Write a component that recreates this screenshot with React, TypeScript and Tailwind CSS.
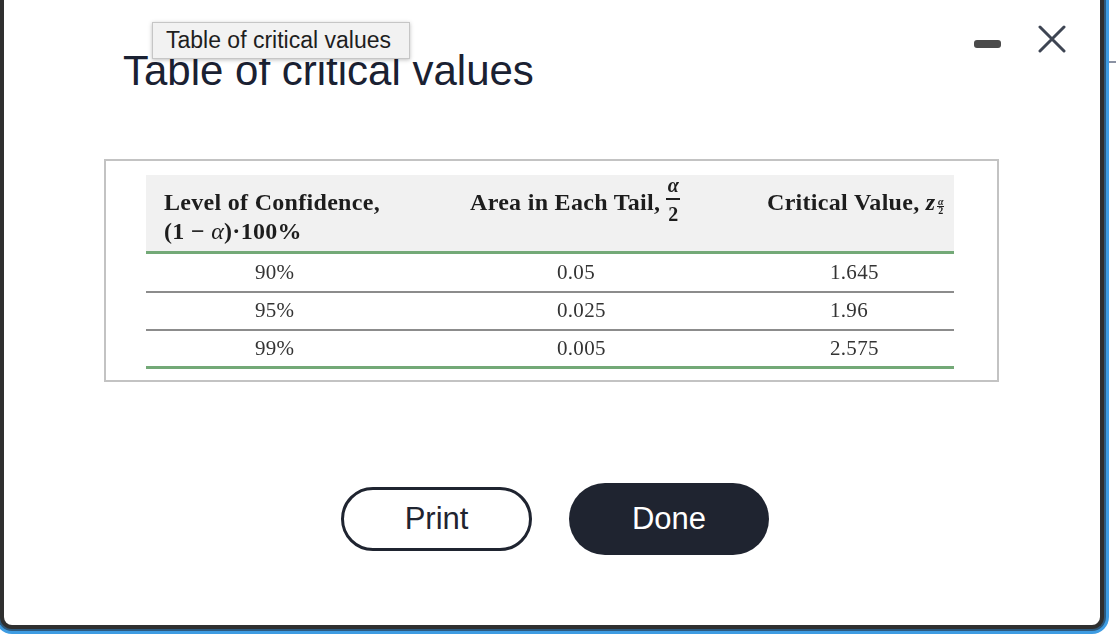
import React from "react";

const sans = "font-['Liberation_Sans',Arial,sans-serif]";
const serif = "font-['Liberation_Serif','Times_New_Roman',serif]";

type Row = { level: string; tail: string; z: string; line: "gray" | "green"; h: string };

const rows: Row[] = [
  { level: "90%", tail: "0.05", z: "1.645", line: "gray", h: "h-[39px]" },
  { level: "95%", tail: "0.025", z: "1.96", line: "gray", h: "h-[38px]" },
  { level: "99%", tail: "0.005", z: "2.575", line: "green", h: "h-[38px]" },
];

function Fraction({ small }: { small?: boolean }) {
  if (small) {
    return (
      <span className="ml-[2px] mt-[10px] flex flex-col items-center">
        <span className="text-[10px] leading-[8px] italic">α</span>
        <span className="h-px w-[7px] bg-[#1d1d1d]" />
        <span className="text-[10px] leading-[8px]">2</span>
      </span>
    );
  }
  return (
    <span className="ml-[6px] mt-[-12px] flex flex-col items-center">
      <span className="text-[20px] leading-[18px] italic">α</span>
      <span className="mb-[5px] mt-[4px] h-[2px] w-[14px] bg-[#1d1d1d]" />
      <span className="text-[20px] leading-[18px]">2</span>
    </span>
  );
}

function CriticalTable() {
  return (
    <div className="ml-[100px] mt-[64px] h-[223px] w-[895px] border-2 border-[#c3c3c3] bg-white pl-[40px] pt-[14px]">
      <div className={`w-[808px] blur-[0.35px] ${serif}`}>
        <div className="grid h-[79px] grid-cols-[302px_300px_206px] border-b-[3px] border-[#73a977] bg-[#f1f1f1] pt-[13px] text-[24px] font-bold leading-[29px] tracking-[0.3px] text-[#1d1d1d]">
          <div className="pl-[18px]">
            <div>Level of Confidence,</div>
            <div>
              (1&nbsp;−&nbsp;<span className="font-normal italic">α</span>)·100%
            </div>
          </div>
          <div className="flex items-start whitespace-nowrap pl-[22px]">
            <span>Area in Each Tail,</span>
            <Fraction />
          </div>
          <div className="flex items-start whitespace-nowrap pl-[19px]">
            <span>
              Critical Value,&nbsp;<span className="italic">z</span>
            </span>
            <Fraction small />
          </div>
        </div>
        {rows.map((r) => (
          <div
            key={r.level}
            className={`grid grid-cols-[302px_300px_206px] items-center text-[21px] tracking-[0.3px] text-[#333] ${r.h} ${
              r.line === "gray" ? "border-b-2 border-[#8c8c8c]" : "border-b-[3px] border-[#73a977]"
            }`}
          >
            <div className="pl-[109px]">{r.level}</div>
            <div className="pl-[109px]">{r.tail}</div>
            <div className="pl-[82px]">{r.z}</div>
          </div>
        ))}
      </div>
    </div>
  );
}

export default function App() {
  return (
    <div className={`flex h-[634px] w-[1116px] overflow-hidden bg-white ${sans}`}>
      <div className="relative flex h-[629px] w-[1104px] shrink-0 flex-col rounded-b-[12px] border-x-4 border-b-4 border-[#2f2f2f] bg-white shadow-[0_0_0_2px_#2d5a7e,0_0_0_5px_#3e9ce2]">
        <div className="flex items-start pr-[34px]">
          <h1 className="mt-[47px] pl-[119px] text-[42px] leading-[48px] font-normal text-[#1a2132]">
            Table of critical values
          </h1>
          <div className="ml-auto mt-[25px] flex items-start gap-[37px]">
            <button type="button" className="mt-[15px] h-[8px] w-[27px] rounded-[3px] bg-[#4a4a4a]" aria-label="Minimize" />
            <button type="button" aria-label="Close" className="text-[#3e4553]">
              <svg width="28" height="28" viewBox="0 0 28 28" fill="none" stroke="currentColor" strokeWidth="3" strokeLinecap="round">
                <path d="M2 2 L26 26 M26 2 L2 26" />
              </svg>
            </button>
          </div>
        </div>

        <div className="absolute left-[148px] top-[22px] h-[37px] w-[258px] border border-[#c6c6c6] bg-[#f2f2f2] pl-[13px] text-[23px] leading-[34px] text-[#1e1e1e] shadow-[0_1px_4px_rgba(0,0,0,0.25)]">
          Table of critical values
        </div>

        <CriticalTable />

        <div className="mt-[101px] flex items-center justify-center gap-[37px] pl-[6px]">
          <button
            type="button"
            className="h-[64px] w-[191px] rounded-full border-[3px] border-[#1f2430] bg-white text-[31px] text-[#1f2430]"
          >
            Print
          </button>
          <button type="button" className="h-[72px] w-[200px] rounded-full bg-[#1f2430] text-[31px] text-white">
            Done
          </button>
        </div>
      </div>
      <div className="ml-[5px] mt-[61px] h-[2px] w-[7px] shrink-0 bg-[#8b92a3]" />
    </div>
  );
}
